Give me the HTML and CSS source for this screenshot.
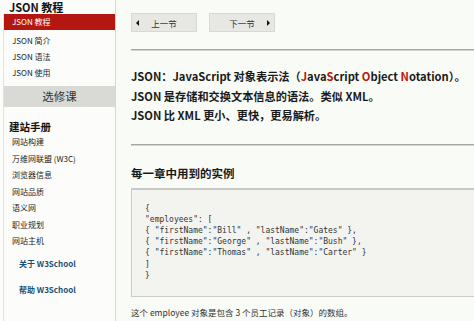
FILE: index.html
```html
<!DOCTYPE html>
<html lang="zh-CN">
<head>
    <meta charset="UTF-8">
    <meta name="viewport" content="width=device-width, initial-scale=1.0">
    <title>JSON 教程</title>
    <link rel="stylesheet" href="styles.css">
</head>
<body>

<div class="page">
    <!-- Sidebar -->
    <div class="sidebar">
        <div class="side-title">JSON 教程</div>
        <ul class="side-list">
            <li class="active">JSON 教程</li>
            <li class="first">JSON 简介</li>
            <li>JSON 语法</li>
            <li>JSON 使用</li>
        </ul>

        <div class="side-bar-title">选修课</div>

        <div class="side-sub">建站手册</div>
        <ul class="side-links">
            <li>网站构建</li>
            <li>万维网联盟 (W3C)</li>
            <li>浏览器信息</li>
            <li>网站品质</li>
            <li>语义网</li>
            <li>职业规划</li>
            <li>网站主机</li>
        </ul>

        <div class="side-about">关于 W3School</div>
        <div class="side-about help">帮助 W3School</div>
    </div>

    <!-- Main Content -->
    <div class="main">
        <div class="nav-buttons">
            <div class="nav-btn"><span class="arrow left"></span><span class="label">上一节</span><span class="spacer"></span></div>
            <div class="nav-btn"><span class="spacer"></span><span class="label">下一节</span><span class="arrow right"></span></div>
        </div>

        <div class="rule"></div>

        <div class="intro">
            <p>JSON：JavaScript 对象表示法（<span class="red">J</span>ava<span class="red">S</span>cript <span class="red">O</span>bject <span class="red">N</span>otation）。</p>
            <p>JSON 是存储和交换文本信息的语法。类似 XML。</p>
            <p>JSON 比 XML 更小、更快，更易解析。</p>
        </div>

        <div class="rule second"></div>

        <h2 class="example-title">每一章中用到的实例</h2>

        <pre class="code-box">{
"employees": [
{ "firstName":"Bill" , "lastName":"Gates" },
{ "firstName":"George" , "lastName":"Bush" },
{ "firstName":"Thomas" , "lastName":"Carter" }
]
}</pre>

        <p class="note">这个 employee 对象是包含 3 个员工记录（对象）的数组。</p>
    </div>
</div>

</body>
</html>
```

FILE: styles.css
```css
* {
    margin: 0;
    padding: 0;
    box-sizing: border-box;
    font-family: 'Noto Sans CJK SC', 'Noto Sans', sans-serif;
}

body {
    background-color: #f9fbf6;
    color: #222;
    overflow: hidden;
    width: 474px;
    height: 321px;
}

ul {
    list-style: none;
}

.page {
    display: flex;
    align-items: flex-start;
    height: 321px;
    overflow: hidden;
}

/* Sidebar */
.sidebar {
    flex: none;
    width: 116px;
    height: 321px;
    overflow: hidden;
    background-color: #fcfdfa;
    border-right: 1px solid #d6d8d2;
}

.side-title {
    height: 14px;
    line-height: 14px;
    padding-left: 9px;
    font-size: 11px;
    font-weight: 700;
    color: #111;
}

.side-list,
.side-bar-title,
.side-sub,
.side-links,
.side-about {
    margin-left: 3px;
    border-left: 1px solid #e2e4de;
}

.side-list li {
    height: 16px;
    line-height: 16px;
    padding-left: 8px;
    font-size: 8px;
    color: #222;
}

.side-list li.active {
    background-color: #b3170f;
    color: #fff;
}

.side-list li.first {
    margin-top: 3px;
}

.side-list {
    padding-bottom: 5px;
}

.side-bar-title {
    height: 21px;
    line-height: 21px;
    text-align: center;
    background-color: #d9dad5;
    font-size: 11.5px;
    color: #333;
}

.side-sub {
    padding: 13px 0 0 5px;
    height: 27px;
    line-height: 14px;
    font-size: 10.5px;
    font-weight: 700;
    color: #111;
}

.side-links li {
    height: 16.5px;
    line-height: 16.5px;
    padding-left: 8px;
    font-size: 8px;
    color: #222;
}

.side-links {
    padding-bottom: 6px;
}

.side-about {
    height: 26px;
    line-height: 16px;
    padding-left: 15px;
    font-size: 8px;
    font-weight: 700;
    color: #1d4f73;
}

.side-about.help {
    height: 60px;
}

/* Main */
.main {
    flex: none;
    width: 380px;
    padding: 13px 0 0 15px;
}

.nav-buttons {
    display: flex;
    gap: 12px;
}

.nav-btn {
    display: flex;
    align-items: center;
    width: 66px;
    height: 19px;
    padding: 0 4px;
    background-color: #e7e8e4;
    border: 1px solid #d8d9d4;
    font-size: 8.5px;
    color: #333;
}

.nav-btn .label {
    flex: 1;
    text-align: center;
}

.arrow,
.spacer {
    width: 3px;
    height: 6px;
}

.arrow.left {
    border-top: 3px solid transparent;
    border-bottom: 3px solid transparent;
    border-right: 3px solid #111;
}

.arrow.right {
    border-top: 3px solid transparent;
    border-bottom: 3px solid transparent;
    border-left: 3px solid #111;
}

.rule {
    margin-top: 17px;
    height: 2px;
    border-top: 1px solid #a5a7a1;
    border-bottom: 1px solid #d2d4ce;
}

.intro {
    margin-top: 16px;
}

.intro p {
    line-height: 19.5px;
    font-size: 11.2px;
    font-weight: 700;
    color: #1a1a1a;
}

.red {
    color: #c0140c;
}

.rule.second {
    margin-top: 18px;
}

.example-title {
    margin-top: 18px;
    line-height: 18px;
    font-size: 11.5px;
    font-weight: 700;
    color: #1a1a1a;
}

.code-box {
    margin-top: 6px;
    padding: 13px 0 15px 13px;
    background-color: #f3f4f0;
    border: 1px solid #cbccc7;
    border-top: 2px solid #c8c9c4;
    font-family: 'DejaVu Sans Mono', monospace;
    font-size: 8px;
    line-height: 11.2px;
    color: #333;
}

.note {
    margin-top: 7px;
    line-height: 16px;
    font-size: 8.5px;
    color: #333;
}
```
